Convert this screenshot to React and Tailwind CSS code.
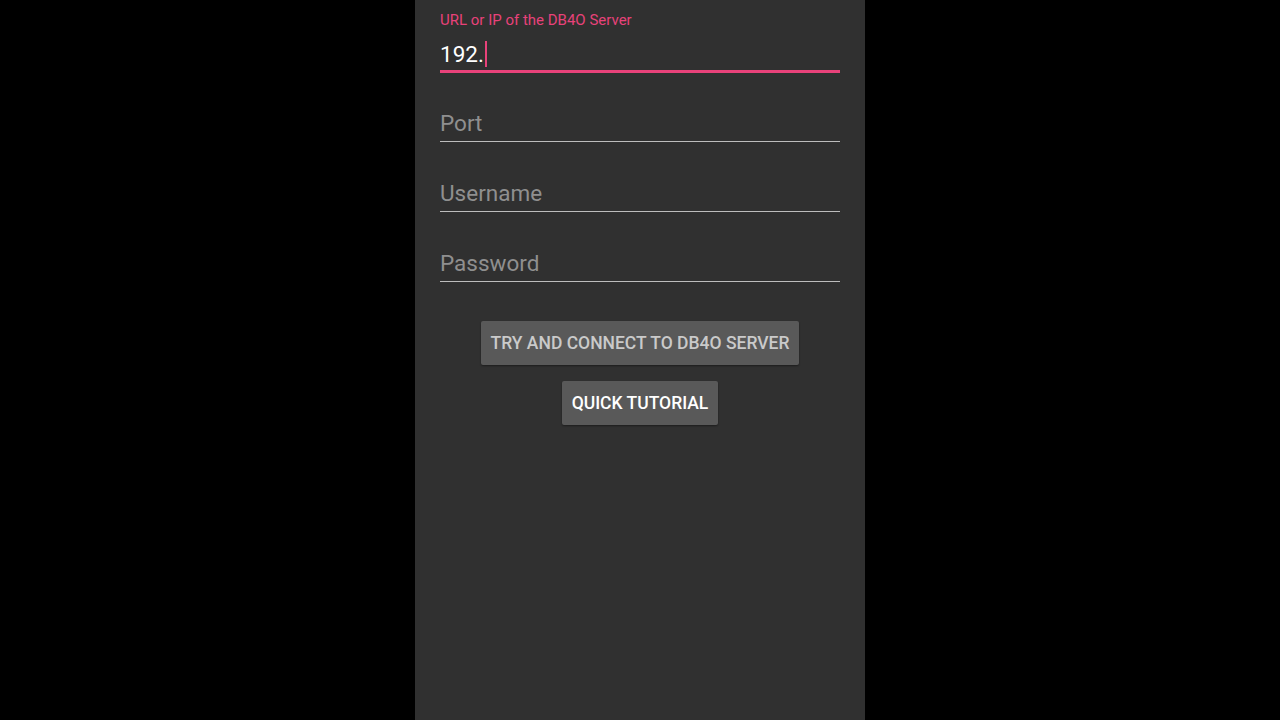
export default function App() {
  return (
    <div
      className="flex h-[720px] w-full justify-center bg-black"
      style={{ fontFamily: "Roboto, 'Liberation Sans', sans-serif" }}
    >
      <div className="flex w-[450px] flex-col bg-[#303030] px-[25px] pt-[11px]">
        {/* Server field (focused) */}
        <label className="text-[15px] leading-[18px] text-[#e8427a]">
          URL or IP of the DB4O Server
        </label>
        <div className="mt-[11px] flex h-[28px] items-center text-[22.5px] leading-[28px] text-white">
          <span>192.</span>
          <span className="ml-px h-[26px] w-[2px] bg-[#e8427a]" />
        </div>
        <div className="mt-[2px] h-[2.5px] w-full bg-[#e8427a]" />

        {/* Other fields */}
        <Field label="Port" className="mt-[36.5px]" />
        <Field label="Username" className="mt-[37px]" />
        <Field label="Password" className="mt-[37px]" />

        {/* Buttons */}
        <div className="mt-[39px] flex flex-col items-center gap-[16px]">
          <button className="h-[44px] rounded-[2px] bg-[#595959] px-[10px] text-[17.5px] font-medium text-[#cacaca] shadow-[0_1px_2px_rgba(0,0,0,0.4)]">
            TRY AND CONNECT TO DB4O SERVER
          </button>
          <button className="h-[44px] rounded-[2px] bg-[#595959] px-[10px] text-[17.5px] font-medium text-white shadow-[0_1px_2px_rgba(0,0,0,0.4)]">
            QUICK TUTORIAL
          </button>
        </div>
      </div>
    </div>
  );
}

function Field({ label, className }) {
  return (
    <div className={className}>
      <div className="h-[28px] text-[22.5px] leading-[28px] text-[#8f8f8f]">{label}</div>
      <div className="mt-[4px] h-px w-full bg-[#bdbdbd]" />
    </div>
  );
}
